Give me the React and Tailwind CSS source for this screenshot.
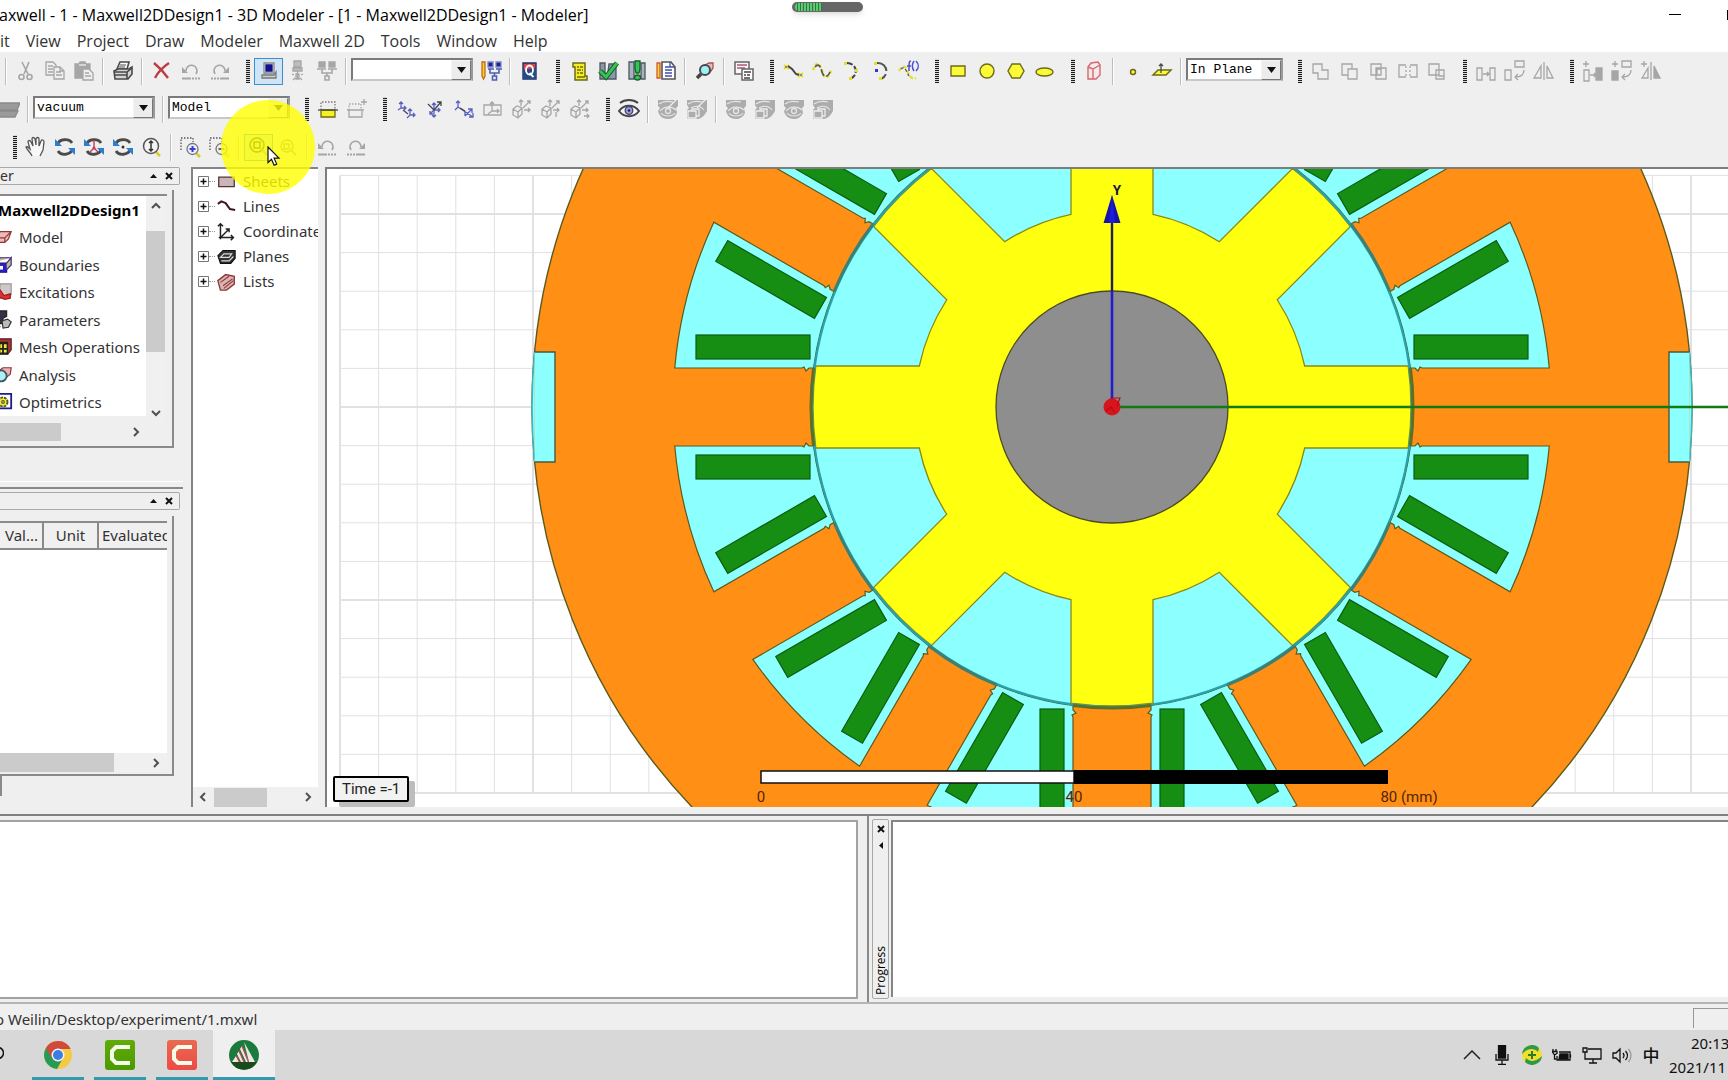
import React from "react";

const GREY = "#a6a6a6";
const DARK = "#4a4a4a";

function Icon({ children, size = 22, className = "" }) {
    return (
        <svg
            width={size}
            height={size}
            viewBox="0 0 22 22"
            fill="none"
            stroke={GREY}
            strokeWidth="1.3"
            className={"shrink-0 " + className}
            aria-hidden="true"
        >
            {children}
        </svg>
    );
}

const undo = (
    <>
        <path d="M6 11a5.500 5.500 0 1 1 10 3" strokeWidth="1.6" />
        <path d="M2 7v6h6z" fill={GREY} stroke="none" />
        <path d="M2 18.500h9M12 18.500h2M15 18.500h2M18 18.500h2" strokeWidth="2" />
    </>
);

const redo = (
    <>
        <path d="M16 11a5.500 5.500 0 1 0-10 3" strokeWidth="1.6" />
        <path d="M20 7v6h-6z" fill={GREY} stroke="none" />
        <path d="M2 18.500h2M5 18.500h2M8 18.500h2M11 18.500h9" strokeWidth="2" />
    </>
);

const rotateBase = (
    <>
        <path d="M4 8c1-5 11-6 14-1M4 15c3 5 12 4 14-1" stroke={DARK} strokeWidth="2.800" />
        <path d="M1 3v7h7z" fill="#2a7fd0" stroke="none" />
        <path d="M21 19v-7h-7z" fill="#2a7fd0" stroke="none" />
    </>
);

const eyeGrey = (
    <>
        <path d="M1 2h20v6l-2 2 1 5c-2 4-5 6-9 6-5 0-9-3-10-8l2-3-2-2z" fill="#acacac" stroke="none" />
        <path d="M2 6c4-3 9-3 14-2M3 13c4-5 12-5 16-1M4 15c3 4 11 4 14 0" stroke="#e6e6e6" strokeWidth="1.200" />
        <circle cx="11" cy="13" r="2.500" stroke="#e6e6e6" />
    </>
);

const eyeGreyBox = (
    <>
        <path d="M1 2h20v11c-2 4-5 7-9 8H1v-9l2-2-2-3z" fill="#acacac" stroke="none" />
        <path d="M2 6c4-3 9-3 14-2M5 10c5-3 10-2 13 2" stroke="#e6e6e6" strokeWidth="1.200" />
        <path d="M2 13h8v7H2zM6 13v-2h7v7h-3" stroke="#ededed" strokeWidth="1.300" />
    </>
);

const triad = (x, y) => (
    <path
        d={`M${x} ${y}v-7m-2 2l2-2 2 2M${x} ${y}h6m-2-2l2 2-2 2M${x} ${y}l-4 4m0-3v3h3`}
        strokeWidth="1.4"
    />
);

const solidAxes = (
    <>
        <path d="M2 11l4-3 5 2v6l-4 4-5-3zM2 11l5 3v6M7 14l4-4" />
        <path d="M10 8V2m-2 2l2-2 2 2M12 10l7-7m-3 0h3v3M13 12h6m-2-2l2 2-2 2" />
    </>
);

const ICONS = {
    layers: (
        <path d="M0 5h22l-3 7H0zM0 13h20l-3 6H0z" fill="#9a9a9a" stroke="#8a8a8a" />
    ),
    cut: (
        <>
            <path d="M7 2l6 12M14 2L9 14" strokeWidth="1.600" />
            <circle cx="6.500" cy="17" r="2.500" strokeWidth="1.600" />
            <circle cx="14.500" cy="17" r="2.500" strokeWidth="1.600" />
        </>
    ),
    copy: (
        <>
            <path d="M2 2h7l3 3v10H2zM4 6h5M4 9h5M4 12h5" />
            <path d="M10 7h6l4 4v8H10z" fill="#efefef" />
            <path d="M12 12h5M12 15h6M16 7v4h4" />
        </>
    ),
    paste: (
        <>
            <path d="M2 4h4l1-2h5l1 2h4v14H2z" fill={GREY} stroke={GREY} />
            <path d="M6 5h7" stroke="#efefef" />
            <path d="M10 9h6l4 4v7H10z" fill="#efefef" />
            <path d="M12 13h4M12 16h6" />
        </>
    ),
    print: (
        <g stroke={DARK} strokeWidth="1.6">
            <path d="M8 2h9l-2 7H5z" fill="#fff" />
            <path d="M8 5h6M7 7h6" strokeWidth="1" />
            <path d="M2 11l4-2h11l3-2v7l-4 5H3z" fill="#d5d5d5" />
            <path d="M2 12h13l5-4M2 15h13v4M15 12v4" />
        </g>
    ),
    remove: (
        <path d="M3 3c5 4 9 8 14 15M18 3C12 7 7 12 4 18" stroke="#bd3b44" strokeWidth="2.400" />
    ),
    undo,
    redo,
    local: (
        <>
            <path d="M6 3h10v10H6z" fill="#e6e6e6" stroke="#888" />
            <path d="M8 5h6v6H8z" fill="#10108c" stroke="#10108c" />
            <path d="M4 15h12l2-3v6H4z" fill="#d0d0d0" stroke="#777" />
        </>
    ),
    remote: (
        <>
            <path d="M7 1h7v6H7zM6 8h9v3H6z" fill="#bdbdbd" />
            <path d="M10.500 11v8M7 15l-2-1M14 15l2-1M8 18l-2 2M13 18l2 2M9 14h3v5H9z" />
        </>
    ),
    cluster: (
        <>
            <path d="M3 2h6v5H3zM13 2h6v5h-6z" fill={GREY} />
            <path d="M1 9h9M12 9h9M6 9v4h10V9M11 13v3M9 16h4v4H9z" strokeWidth="1.600" />
        </>
    ),
    clusterEdit: (
        <>
            <path d="M2 2h3v14l-1.500 3L2 16z" fill="#f2d21c" stroke="#c66a1e" />
            <path d="M8 2h5v5H8zM16 2h5v5h-5z" fill="#20208c" stroke="#7d88c8" />
            <path d="M8 9h6M16 9h6M10 9v4h9V9M14.500 13v3M12.500 16h4v4h-4z" stroke="#4d5fb0" strokeWidth="1.600" />
        </>
    ),
    queue: (
        <>
            <path d="M4 3h13v16H4z" fill="#d7474f" stroke="#1a3266" strokeWidth="1.400" />
            <path d="M4 10v9h13V8z" fill="#254a86" stroke="none" />
            <ellipse cx="10.500" cy="10" rx="3.500" ry="4.500" stroke="#fff" strokeWidth="1.800" />
            <path d="M10.500 13l4 4" stroke="#fff" strokeWidth="1.800" />
        </>
    ),
    list: (
        <>
            <path d="M5 3h12v13h2v4H7V7H5z" fill="#f4ee22" stroke="#6d6a1c" strokeWidth="1.500" />
            <path d="M9 7h2M12 7h3M9 10h4M14 10h1M9 13h2M12 13h3M9 17h8" stroke="#6d6a1c" />
        </>
    ),
    validate: (
        <>
            <path d="M3 3h5v16H3zM12 4h7v15h-9z" fill="#8c98a8" stroke="#4c5866" />
            <path d="M3 11l6 6L20 3" stroke="#145a20" strokeWidth="5" />
            <path d="M3 11l6 6L20 3" stroke="#35c455" strokeWidth="3" />
        </>
    ),
    analyze: (
        <>
            <path d="M3 2h5v17H3zM15 3h4v16h-4z" fill="#a9b3c0" stroke="#4c5866" />
            <path d="M9 1h5v8l-1 4h-3L9 9z" fill="#35c455" stroke="#1a5c2b" />
            <ellipse cx="11.500" cy="17.500" rx="3" ry="2.500" fill="#35c455" stroke="#1a5c2b" />
        </>
    ),
    notes: (
        <>
            <path d="M2 3h3v15H2z" fill="#f3da1c" stroke="#d8553c" />
            <path d="M7 2h9l4 5v12H7z" fill="#fff" stroke="#555" strokeWidth="1.600" />
            <path d="M10 7h5M10 10h7M10 13h7M10 16h7M15 2v5h5" stroke="#3f4fa8" />
        </>
    ),
    inspect: (
        <>
            <path d="M11 5l4-2h4v5l-4 6" fill="#e9b8b8" stroke="#a35454" />
            <circle cx="11" cy="10" r="5" fill="#9ff0f6" stroke={DARK} strokeWidth="2" />
            <path d="M7 14l-4 4" stroke="#444" strokeWidth="3.500" />
        </>
    ),
    windows: (
        <g stroke="#666">
            <path d="M2 2h14v12H2z" fill="#f6f6f6" strokeWidth="1.500" />
            <path d="M4 5h10M4 8h8" stroke="#b05a72" />
            <path d="M9 9h11v11H9z" fill="#fff" strokeWidth="1.500" />
            <path d="M11 12h7M11 15h2M14 15h3M11 18h6" stroke="#444" />
        </g>
    ),
    line: (
        <>
            <path d="M2 5l5 4M2 9l5-4M16 13l5 4M16 17l5-4" stroke="#e3df26" strokeWidth="2" />
            <path d="M6 6l4 3 4 5 3 1" stroke="#444" strokeWidth="2" />
            <path d="M3 7h2M18 15h2" stroke="#777" strokeWidth="1.500" />
        </>
    ),
    spline: (
        <>
            <path d="M2 10c3-9 7-7 9 1s6 9 9-1" stroke="#e3df26" strokeWidth="2.600" strokeDasharray="3 2" />
            <path d="M4 7c4-5 6 1 7 5s5 7 8 0" stroke="#555" strokeWidth="1.600" strokeDasharray="7 2" />
        </>
    ),
    arc3: (
        <>
            <path d="M6 3c10-1 14 12 4 16" stroke="#444" strokeWidth="2" strokeDasharray="7 2" />
            <path d="M4 2h3v3H4zM15 9h3v3h-3zM9 17h3v3H9z" fill="#e3df26" stroke="none" />
        </>
    ),
    arcCenter: (
        <>
            <path d="M8 3c10-1 13 12 4 16" stroke="#555" strokeWidth="2" strokeDasharray="14 3" />
            <path d="M6 9h3v3H6z" fill="#3038d8" stroke="none" />
            <path d="M5 2h3v3H5zM10 17h3v3h-3z" fill="#e3df26" stroke="none" />
        </>
    ),
    equation: (
        <>
            <path d="M1 11c3-5 6-6 8-1s4 10 9 8" stroke="#e3df26" strokeWidth="2.200" strokeDasharray="4 2" />
            <path d="M3 9c4-4 6 4 8 7" stroke="#555" strokeDasharray="3 2" />
            <path d="M13 1c-2 0-2 1-2 10M9 6h4M16 1c-2 3-2 7 0 10M18 1c3 3 3 7 0 10" stroke="#4c50d6" strokeWidth="1.500" />
        </>
    ),
    rect: <path d="M4 6h14v10H4z" fill="#fbfb35" stroke="#6d6a1c" strokeWidth="1.400" />,
    circle: <circle cx="11" cy="11" r="7" fill="#fbfb35" stroke="#6d6a1c" strokeWidth="1.400" />,
    hexagon: <path d="M7 4h8l4 7-4 7H7l-4-7z" fill="#fbfb35" stroke="#6d6a1c" strokeWidth="1.400" />,
    ellipse: <ellipse cx="10.500" cy="12" rx="8.500" ry="4" fill="#fbfb35" stroke="#6d6a1c" strokeWidth="1.400" />,
    box: (
        <path d="M5 7l3-4 7-1 2 3v10l-4 4H5zM5 7l5 2 7-4M10 9v10" fill="#f6e9e9" stroke="#d8666e" strokeWidth="1.400" />
    ),
    point: <circle cx="11" cy="12" r="2.500" fill="#fbfb35" stroke="#6d6a1c" strokeWidth="1.500" />,
    plane: (
        <>
            <path d="M2 15l5-5h13l-5 5z" fill="#fbfb35" stroke="#6d6a1c" strokeWidth="1.500" />
            <path d="M10 13V4m-2 2l2-2 2 2" stroke={DARK} />
        </>
    ),
    unite: <path d="M3 4h9v6h6v9H8v-6H3z" />,
    subtract: <path d="M3 4h10v5h5v10H9v-4H3zM9 15V9h5" />,
    intersect: <path d="M3 4h10v11H3zM8 8h10v11H8zM9 9h4v6H9z" />,
    split: <path d="M9 5H2v12h7M13 5h7v12h-7M9 6v2M13 6v2M9 10v2M13 10v2M9 14v2M13 14v2" />,
    imprint: <path d="M3 4h10v11H3zM10 10h8v9h-8zM13 10v6h5" />,
    move: <path d="M2 8h5v12H2zM15 8h5v12h-5zM8 14h6m-2-2l2 2-2 2" />,
    rotate: <path d="M1 10h6v10H1zM11 1h9v6h-9zM20 10c0 5-4 7-9 7m3-3l-3 3 3 3" />,
    mirror: <path d="M11 2v18M8 6v12H1zM14 6v12h6z" />,
    moveCopy: (
        <>
            <path d="M2 10h5v11H2zM8 15h6m-2-2l2 2-2 2M4 1v6M1 4h6" />
            <path d="M14 8h6v12h-6z" fill={GREY} />
        </>
    ),
    rotateCopy: (
        <>
            <path d="M11 1h9v6h-9zM20 10c0 5-4 7-9 7m3-3l-3 3 3 3M4 1v6M1 4h6" />
            <path d="M1 11h6v9H1z" fill={GREY} />
        </>
    ),
    mirrorCopy: (
        <>
            <path d="M11 2v18M8 8v10H2zM4 1v6M1 4h6" />
            <path d="M14 6v12h6z" fill={GREY} />
        </>
    ),
    section: (
        <>
            <path d="M4 12V4h14v8" stroke="#777" strokeDasharray="1.500 1.500" />
            <path d="M4 12h14v7H4z" fill="#f4f41c" stroke="#6d6a1c" />
            <path d="M1 12h20" stroke={DARK} />
        </>
    ),
    sectionAdd: (
        <>
            <path d="M3 12V6h12v5" strokeDasharray="1.500 1.500" />
            <path d="M3 12h13v7H3zM1 12h17M18 1v6M15 4h6" />
        </>
    ),
    csRelative: (
        <g stroke="#5a62c0">
            <path d="M6 10V4m-2 2l2-2 2 2M6 10h5m-2-2l2 2-2 2M6 10l-3 2M15 17v-6m-2 2l2-2 2 2M15 17h5m-2-2l2 2-2 2M15 17l-3 3" />
            <path d="M8 12l5 4" stroke="#444" />
        </g>
    ),
    csRotate: (
        <g stroke="#5a62c0">
            {triad(10, 12)}
            <path d="M10 12v7m-2-2l2 2 2-2" />
            <path d="M10 12l7-8m-4 0h4v4M10 12L4 6" stroke="#444" />
        </g>
    ),
    csBoth: (
        <g stroke="#5a62c0">
            <path d="M5 9V3m-2 2l2-2 2 2M5 9l-3 3M5 9l15 10m-4 0h4v-4M12 18l7-7m-4 0h4v4M12 18v-4" />
            <path d="M7 10l5 3" stroke="#444" />
        </g>
    ),
    csFace: <path d="M2 7h17v10H2zM10 13V4m-2 2l2-2 2 2M10 13h7m-2-2l2 2-2 2M10 13l-4 3" />,
    csObject: solidAxes,
    csObjectRotate: <>{solidAxes}<path d="M16 14v5" /></>,
    csObjectBoth: <>{solidAxes}<path d="M15 18h5m-2-2l2 2-2 2" /></>,
    eye: (
        <>
            <path d="M2 5c5-4 13-4 18 0" stroke="#444" strokeWidth="2" />
            <path d="M1 13c5-7 15-7 20 0-5 7-15 7-20 0z" fill="#f4f4f4" stroke="#44444c" strokeWidth="2" />
            <circle cx="11" cy="12.500" r="3.800" fill="#9d9dd2" stroke="#44446c" strokeWidth="1.300" />
            <circle cx="11" cy="12.500" r="1.300" fill="#20208c" stroke="none" />
        </>
    ),
    hideSel: <>{eyeGrey}<path d="M11 10l9-9" stroke="#efefef" strokeWidth="1.200" /></>,
    hideSelBox: <>{eyeGreyBox}<path d="M11 10l9-9" stroke="#efefef" strokeWidth="1.200" /></>,
    eyeGrey,
    eyeGreyBox,
    pan: (
        <path
            d="M7 20c-1-3-5-6-6-9 1-1 2 0 4 2L3 6c0-2 2-2 3 0l2 4-1-7c0-2 2-2 3 0l1 6V3c0-2 3-2 3 0v7l2-5c1-2 3-1 3 1l-1 8-3 6"
            fill="#f8f8f8"
            stroke="#555"
        />
    ),
    rotateModel: rotateBase,
    rotateCurrent: (
        <>
            {rotateBase}
            <path d="M11 4v8M7 16l4-4 4 4" stroke="#c43f5a" strokeWidth="1.400" />
            <circle cx="11" cy="12" r="1.500" fill="#c43f5a" stroke="none" />
        </>
    ),
    rotateScreen: <>{rotateBase}<circle cx="11" cy="11" r="1.500" fill="#333" stroke="none" /></>,
    zoom: (
        <>
            <path d="M14 15l5 5" stroke="#d6cf2a" strokeWidth="2.500" />
            <circle cx="10" cy="10" r="7.500" fill="#f3f3f3" stroke="#555" strokeWidth="1.500" />
            <path d="M10 5v10M8 7l2-2 2 2M8 13l2 2 2-2" stroke="#333" strokeWidth="1.500" />
        </>
    ),
    zoomIn: (
        <>
            <path d="M1 14V2h12v4" stroke="#555" strokeDasharray="1.500 1.500" />
            <path d="M16 17l4 4" stroke="#d6cf2a" strokeWidth="2.500" />
            <circle cx="12.500" cy="13" r="5.500" fill="#eef" stroke="#777" />
            <path d="M12.500 10v6M9.500 13h6" stroke="#3440c8" strokeWidth="2" />
        </>
    ),
    zoomOut: (
        <>
            <path d="M1 14V2h12v4" stroke="#555" strokeDasharray="1.500 1.500" />
            <path d="M16 17l4 4" stroke="#d6cf2a" strokeWidth="2.500" />
            <circle cx="12.500" cy="13" r="5.500" fill="#eee" stroke="#777" />
            <path d="M9.500 13h6" stroke="#666" strokeWidth="2" />
        </>
    ),
    fitAll: (
        <>
            <circle cx="9" cy="9" r="7" stroke="#222" strokeWidth="1.500" />
            <path d="M6 6h6v6H6z" stroke="#222" strokeWidth="1.500" />
            <path d="M14 14l5 5" stroke="#999" strokeWidth="2" />
        </>
    ),
    fitSel: (
        <>
            <circle cx="10" cy="10" r="6" stroke="#888" />
            <path d="M7 8h5v5H7zM14 14l5 5" stroke="#888" />
        </>
    ),
};

function Tool({ name, label, active = false }) {
    return (
        <button
            type="button"
            aria-label={label || name}
            className={
                "flex h-[27px] w-[29px] shrink-0 items-center justify-center border " +
                (active ? "border-[#3a8fd0] bg-[#cfe5f7]" : "border-transparent")
            }
        >
            <Icon>{ICONS[name]}</Icon>
        </button>
    );
}

function Tools({ names }) {
    return names.split(" ").map((name) => <Tool key={name} name={name} />);
}

function Sep() {
    return <span className="mx-[4px] h-[27px] w-[2px] shrink-0 border-r border-white bg-[#bdbdbd]" />;
}

function Grip() {
    return (
        <span className="mr-1 ml-3 h-[24px] w-1 shrink-0 bg-[repeating-linear-gradient(0deg,#1c1c1c_0_1px,#d8d8d8_1px_2px)]" />
    );
}

function Combo({ label, value, className }) {
    return (
        <label className={"relative mr-[3px] mb-[3px] h-[23px] shrink-0 " + className}>
            <select
                aria-label={label}
                className="block h-full w-full appearance-none border-2 border-[#7a7a7a] border-r-[#9a9a9a] border-b-[#c8c8c8] bg-white pl-[2px] font-['Liberation_Mono','DejaVu_Sans_Mono',monospace] text-[13px] leading-[18px] text-black"
                defaultValue={value}
            >
                <option>{value}</option>
            </select>
            <span className="pointer-events-none absolute top-[2px] right-[2px] flex h-[20px] w-[20px] items-center justify-center border border-t-[#f4f4f4] border-r-[#777] border-b-[#777] border-l-[#f4f4f4] bg-[#ececec]">
                <svg width="9" height="6" viewBox="0 0 9 6"><path d="M0 0h9L4.500 6z" fill="#111" /></svg>
            </span>
        </label>
    );
}

function Chevron({ dir }) {
    const paths = {
        up: "M1 7l4-4 4 4",
        down: "M1 3l4 4 4-4",
        left: "M7 1L3 5l4 4",
        right: "M3 1l4 4-4 4",
    };
    return (
        <button type="button" aria-label={"Scroll " + dir} className="flex h-[19px] w-[19px] shrink-0 items-center justify-center">
            <svg width="10" height="10" viewBox="0 0 10 10" fill="none" stroke="#505050" strokeWidth="2">
                <path d={paths[dir]} />
            </svg>
        </button>
    );
}

function DockTitle({ children }) {
    return (
        <div className="mr-[3px] flex h-[18px] shrink-0 items-center rounded-r-[2px] border border-l-0 border-[#a8a8a8]">
            <span className="flex-1 text-[14px] leading-[16px] text-[#333]">{children}</span>
            <button type="button" aria-label="Collapse" className="flex w-4 justify-center">
                <svg width="7" height="4" viewBox="0 0 7 4"><path d="M0 4l3.500-4L7 4z" fill="#111" /></svg>
            </button>
            <button type="button" aria-label="Close" className="mr-[2px] flex w-4 justify-center">
                <svg width="8" height="8" viewBox="0 0 8 8"><path d="M1 1l6 6M7 1L1 7" stroke="#111" strokeWidth="2" /></svg>
            </button>
        </div>
    );
}

const PROJECT_ITEMS = [
    ["Model", <path key="i" d="M1 12L8 5h12l-3 8-4 4H1zM1 12h12v5M13 12l7-7" fill="#f0b9b9" stroke="#8b3a3a" />],
    ["Boundaries", <><path d="M1 9h14v10H1z" fill="#2a1cc8" stroke="#1c1480" /><path d="M4 12h7v4H4z" fill="#fff" stroke="none" /><path d="M15 9l5-6v8l-5 5M2 8l6-5h12" fill="#c8b894" stroke="#3a2a80" /></>],
    ["Excitations", <><path d="M8 2h12v12l-4 4H6z" fill="#d0c8c8" stroke="#999" /><path d="M1 14l5-8 6 9 7-2v5l-6 1z" fill="#e03030" stroke="#a01818" /></>],
    ["Parameters", <><path d="M3 1h12v6l-4 2v6H3z" fill="#333348" stroke="#222" /><path d="M5 5h3M10 12l6-2 4 3-3 6-6 1z" fill="#bbb" stroke="#333" /><path d="M3 15l5 4" stroke="#a01848" strokeWidth="2" /></>],
    ["Mesh Operations", <><path d="M1 6l4-4h15v12l-4 5" fill="#a33" stroke="#522" /><path d="M1 6h15v13H1z" fill="#222" stroke="#222" /><path d="M3 8h3v4H3zM8 8h2v4H8zM12 8h3v4h-3zM3 14h3v3H3zM8 14h2v3H8zM12 14h3v3h-3z" fill="#f2ec30" stroke="none" /></>],
    ["Analysis", <><path d="M6 7l5-4h9l-1 7-6 5" fill="#eeb0b0" stroke="#8b3a3a" /><circle cx="9" cy="12" r="6" fill="#aef0f4" stroke="#3c5560" strokeWidth="2" /></>],
    ["Optimetrics", <><path d="M2 2h18v16H2z" fill="#fff" stroke="#1c1c90" strokeWidth="2" /><circle cx="11" cy="11" r="5" fill="#f2ec30" stroke="#555520" strokeWidth="2" strokeDasharray="3 1" /><circle cx="11" cy="11" r="1.500" stroke="#555" /></>],
];

function ProjectManager() {
    return (
        <section className="flex h-[315px] shrink-0 flex-col pt-px">
            <DockTitle>er</DockTitle>
            <div className="mt-[5px] mr-[9px] h-[258px] border-r-2 border-b-2 border-[#8a8a8a] pt-[4px] pr-[5px]">
                <div className="flex h-[228px] border-t-2 border-[#8a8a8a]">
                    <ul className="grid h-[220px] flex-1 grid-rows-8 overflow-hidden bg-white text-[15px] text-[#333]">
                        <li className="-ml-[2px] flex items-center font-bold text-black">Maxwell2DDesign1</li>
                        {PROJECT_ITEMS.map(([name, drawing]) => (
                            <li key={name} className="flex items-center whitespace-nowrap">
                                <Icon size={20} className="mr-[6px] -ml-[7px]">{drawing}</Icon>
                                {name}
                            </li>
                        ))}
                    </ul>
                    <div className="mr-[2px] flex w-[19px] flex-col justify-between bg-[#f0f0f0]">
                        <Chevron dir="up" />
                        <div className="mt-[16px] mb-auto h-[121px] bg-[#cbcbcb]" />
                        <Chevron dir="down" />
                    </div>
                </div>
                <div className="flex h-[19px] items-center">
                    <div className="h-[18px] w-[61px] bg-[#cbcbcb]" />
                    <div className="mr-[22px] ml-auto"><Chevron dir="right" /></div>
                </div>
            </div>
        </section>
    );
}

function Properties() {
    return (
        <section className="flex flex-1 flex-col border-t border-white">
            <div className="mt-[5px] mb-[3px] h-[2px] shrink-0 bg-[#8a8a8a]" />
            <DockTitle />
            <div className="mt-[6px] mr-[9px] flex h-[260px] flex-col border-r-2 border-b-2 border-[#8a8a8a] pt-[5px] pr-[5px] pb-[2px]">
                <div className="flex-1 overflow-hidden border-t-2 border-[#8a8a8a] bg-white">
                    <table className="w-full table-fixed border-collapse text-[15px] text-[#333]">
                        <thead>
                            <tr className="h-[26px] border-b-2 border-[#8a8a8a] bg-[#f0f0f0]">
                                <th className="w-[43px] border-r-2 border-[#8a8a8a] p-0 pl-[5px] text-left font-normal">Val...</th>
                                <th className="w-[55px] border-r-2 border-[#8a8a8a] p-0 font-normal">Unit</th>
                                <th className="overflow-hidden p-0 pl-[3px] text-left font-normal">Evaluated</th>
                            </tr>
                        </thead>
                    </table>
                </div>
                <div className="flex h-[19px] items-center bg-[#f0f0f0]">
                    <div className="h-[19px] w-[114px] bg-[#cbcbcb]" />
                    <div className="mr-[2px] ml-auto"><Chevron dir="right" /></div>
                </div>
            </div>
            <div className="h-[20px] w-[2px] bg-[#8a8a8a]" />
        </section>
    );
}

const MODEL_ITEMS = [
    ["Sheets", <path key="i" d="M2 6h18v11H2z" fill="#c9b6bb" stroke="#5a3030" strokeWidth="1.500" />],
    ["Lines", <path key="i" d="M1 8l4-3 5 2 5 7 6 1" stroke="#43181e" strokeWidth="2.400" />],
    ["Coordinate Systems", <path key="i" d="M4 20V2M1 5l3-3 3 3M2 18h17M16 15l3 3-3 3M5 17L14 8M10 8h4v4" stroke="#222" strokeWidth="1.700" />],
    ["Planes", <><path d="M1 10l6-6h14v9l-5 6H4z" fill="#333" stroke="#111" /><path d="M4 12l4-4h9l-3 4zM5 16h9l5-5" stroke="#ddd" strokeWidth="1.300" /></>],
    ["Lists", <><path d="M1 10l9-7 10 2v9l-9 7H4z" fill="#ddb3b3" stroke="#8b3a3a" strokeWidth="1.600" /><path d="M4 12l10-7M7 16l11-8M8 19L19 10" stroke="#8b3a3a" /></>],
];

function ModelTree() {
    return (
        <section className="mt-px flex w-[134px] shrink-0 flex-col">
            <div className="mr-[7px] flex flex-1 flex-col border-t-2 border-l-2 border-[#858585] bg-white">
                <ul className="flex-1 overflow-hidden text-[15px] text-[#333]">
                    {MODEL_ITEMS.map(([name, drawing]) => (
                        <li key={name} className="flex h-[25px] items-center whitespace-nowrap">
                            <button type="button" aria-label={"Expand " + name} className="ml-[5px] shrink-0">
                                <svg width="11" height="11" viewBox="0 0 11 11" fill="none">
                                    <path d="M.5.5h10v10H.5z" stroke="#777" />
                                    <path d="M2.500 5.500h6M5.500 2.500v6" stroke="#111" strokeWidth="1.500" />
                                </svg>
                            </button>
                            <span className="mr-[2px] w-[6px] shrink-0 border-t border-dotted border-[#999]" />
                            <Icon size={19}>{drawing}</Icon>
                            <span className="ml-[7px]">{name}</span>
                        </li>
                    ))}
                </ul>
                <div className="flex h-[20px] items-center bg-[#f0f0f0]">
                    <Chevron dir="left" />
                    <div className="ml-[2px] h-[19px] w-[53px] bg-[#cbcbcb]" />
                    <div className="mr-px ml-auto"><Chevron dir="right" /></div>
                </div>
            </div>
        </section>
    );
}

// Motor cross-section, all radii in drawing units around the shaft centre.
const CX = 785;
const CY = 238;
const R_STATOR = 580;
const R_SLOT = 439;
const R_BORE = 301;
const R_ROTOR = 299;
const R_HUB = 197;
const R_SHAFT = 116;
const TOOTH = 39;
const POLE = 41;
const GRID = 38.6;

function rot(x, y, deg) {
    const a = (deg * Math.PI) / 180;
    return [x * Math.cos(a) - y * Math.sin(a), x * Math.sin(a) + y * Math.cos(a)];
}

function pts(list) {
    return list.map(([x, y]) => x.toFixed(2) + " " + y.toFixed(2)).join("L");
}

const boreX = Math.sqrt(R_BORE ** 2 - TOOTH ** 2);

function slotPath() {
    const xo = Math.sqrt(R_SLOT ** 2 - TOOTH ** 2);
    const edge = [[boreX, TOOTH], [303, TOOTH], [306, TOOTH - 3], [308, TOOTH + 1], [310, TOOTH], [xo, TOOTH]];
    const back = edge.map(([x, y]) => rot(x, -y, 30)).reverse();
    return `M${pts(edge)}A${R_SLOT} ${R_SLOT} 0 0 1 ${pts(back)}A${R_BORE} ${R_BORE} 0 0 0 ${pts([edge[0]])}Z`;
}

function rotorPath() {
    const xo = Math.sqrt(R_ROTOR ** 2 - POLE ** 2);
    const xi = Math.sqrt(R_HUB ** 2 - POLE ** 2);
    let d = "";
    for (let i = 0; i < 8; i++) {
        const a = rot(xi, -POLE, i * 45);
        const b = rot(xo, -POLE, i * 45);
        const c = rot(xo, POLE, i * 45);
        const e = rot(xi, POLE, i * 45);
        d += i === 0 ? `M${pts([a])}` : `A${R_HUB} ${R_HUB} 0 0 1 ${pts([a])}`;
        d += `L${pts([b])}A${R_ROTOR} ${R_ROTOR} 0 0 1 ${pts([c])}L${pts([e])}`;
    }
    return d + `A${R_HUB} ${R_HUB} 0 0 1 ${pts([rot(xi, -POLE, 0)])}Z`;
}

const TWELVE = Array.from({ length: 12 }, (_, i) => i * 30);

function Viewport() {
    const keyX = Math.sqrt(R_STATOR ** 2 - 55 ** 2);
    return (
        <section className="relative mt-px min-w-0 flex-1 overflow-hidden border-t-2 border-l-2 border-[#7d7d7d] bg-white">
            <svg className="block h-full w-full" aria-label="Motor cross-section">
                <g transform={`translate(${CX} ${CY})`}>
                    <g stroke="#e1e1e1">
                        {Array.from({ length: 41 }, (_, i) => i - 20).map((k) => (
                            <line key={"v" + k} x1={k * GRID} x2={k * GRID} y1={-6 * GRID} y2={10 * GRID} strokeWidth={k % 5 === 0 ? 2 : 1} />
                        ))}
                        {Array.from({ length: 17 }, (_, i) => i - 6).map((k) => (
                            <line key={"h" + k} x1={-20 * GRID} x2={20 * GRID} y1={k * GRID} y2={k * GRID} strokeWidth={k % 5 === 0 ? 2 : 1} />
                        ))}
                    </g>
                    <circle r={R_STATOR} fill="#ff9015" stroke="#5c5a1c" strokeWidth="1.400" />
                    {[1, -1].map((s) => (
                        <g key={s} transform={`scale(${s} 1)`}>
                            <path d={`M${keyX} -55A${R_STATOR} ${R_STATOR} 0 0 1 ${keyX} 55`} fill="#8cffff" stroke="#3fb4bc" strokeWidth="1.500" />
                            <path d={`M${keyX} -55H557V55H${keyX}`} fill="#8cffff" stroke="#4a5a3a" strokeWidth="1.400" />
                        </g>
                    ))}
                    <circle r={R_BORE} fill="#8cffff" />
                    {TWELVE.map((a) => (
                        <path key={a} d={slotPath()} transform={`rotate(${a})`} fill="#8cffff" stroke="#5c5a1c" strokeWidth="1.200" />
                    ))}
                    {TWELVE.map((a) => (
                        <g key={a} transform={`rotate(${a})`} fill="#168e14" stroke="#0c5c0c" strokeWidth="1.200">
                            <rect x="302" y="-72" width="114" height="24" />
                            <rect x="302" y="48" width="114" height="24" />
                        </g>
                    ))}
                    <path d={rotorPath()} fill="#ffff10" stroke="#8a8a14" strokeWidth="1.300" />
                    <circle r={R_BORE - 1} stroke="#27a3b0" strokeWidth="2.200" fill="none" />
                    {TWELVE.map((a) => (
                        <path
                            key={a}
                            d={`M${boreX} -${TOOTH}A${R_BORE} ${R_BORE} 0 0 1 ${boreX} ${TOOTH}`}
                            transform={`rotate(${a})`}
                            fill="none"
                            stroke={a % 90 === 0 ? "#5f7022" : "#3d7f70"}
                            strokeWidth="3"
                        />
                    ))}
                    <circle r={R_SHAFT} fill="#8e8e8e" stroke="#4c4c20" strokeWidth="1.300" />
                    <line x1="0" x2="1200" y1="0" y2="0" stroke="#137a13" strokeWidth="2.400" />
                    <line x1="0" x2="0" y1="0" y2={-R_SHAFT} stroke="#2020d0" strokeWidth="2.600" />
                    <line x1="0" x2="0" y1={-R_SHAFT} y2="-184" stroke="#202048" strokeWidth="2.400" />
                    <path d="M0-212L8.500-184H-8.500z" fill="#1414a8" />
                    <path d="M0-212L3-184H-3z" fill="#1c1ce0" />
                    <circle r="8.500" fill="#d8141c" />
                    <path d="M-2-9h10l-3 8M-6 4l5-4 4 6" stroke="#b01016" strokeWidth="1.200" fill="none" />
                    <text x="5" y="-212" textAnchor="middle" fontSize="14" fontWeight="bold" fontFamily="'Liberation Mono', monospace" fill="#141450">Y</text>
                    <rect x="-351" y="364" width="313" height="12" fill="#fff" stroke="#111" strokeWidth="1.500" />
                    <rect x="-38" y="363" width="314" height="14" fill="#000" />
                    <g fontSize="15" fontFamily="Roboto, sans-serif" fill="#54240a" textAnchor="middle">
                        <text x="-351" y="395">0</text>
                        <text x="-38" y="395">40</text>
                        <text x="297" y="395">80 (mm)</text>
                    </g>
                </g>
            </svg>
            <div className="absolute bottom-[5px] left-[6px] rounded-[2px] border-2 border-black bg-[#f2f2f2] px-[7px] font-['Roboto',sans-serif] text-[15px] leading-[22px] text-[#222] shadow-[6px_5px_0_#bdbdbd]">
                Time =-1
            </div>
        </section>
    );
}

function BottomDocks() {
    return (
        <div className="flex h-[190px] shrink-0 border-t-2 border-b-2 border-t-[#808080] border-b-[#b4b4b4]">
            <div className="flex w-[869px] shrink-0 border-r-2 border-[#8a8a8a] pt-[4px] pr-[9px] pb-[3px]">
                <div className="flex-1 border-t-2 border-r-2 border-b-2 border-[#a2a2a2] bg-white" />
            </div>
            <div className="m-[3px] mr-[2px] flex w-[17px] shrink-0 flex-col items-center rounded-[2px] border border-[#a8a8a8] pt-[5px] pb-[3px]">
                <button type="button" aria-label="Close progress">
                    <svg width="8" height="8" viewBox="0 0 8 8" className="block"><path d="M1 1l6 6M7 1L1 7" stroke="#111" strokeWidth="2" /></svg>
                </button>
                <button type="button" aria-label="Collapse progress" className="mt-[9px]">
                    <svg width="4" height="7" viewBox="0 0 4 7" className="block"><path d="M4 0v7L0 3.500z" fill="#111" /></svg>
                </button>
                <span className="mt-auto rotate-180 font-['Open_Sans',sans-serif] text-[12px] leading-[14px] text-black [writing-mode:vertical-rl]">Progress</span>
            </div>
            <div className="mt-[4px] mb-[5px] flex-1 border-t-2 border-l-2 border-[#858585] bg-white" />
        </div>
    );
}

function Camtasia({ from, to, id }) {
    return (
        <svg width="30" height="30" viewBox="0 0 30 30" aria-hidden="true">
            <defs>
                <linearGradient id={id} x1="0" y1="0" x2="0" y2="1">
                    <stop offset="0" stopColor={from} />
                    <stop offset="1" stopColor={to} />
                </linearGradient>
            </defs>
            <rect width="30" height="30" rx="3" fill={`url(#${id})`} />
            <path d="M25 7H11L7 11v8l4 4h14" fill="none" stroke="#f4fbe8" strokeWidth="4" />
        </svg>
    );
}

function TaskApp({ label, active, children }) {
    return (
        <button
            type="button"
            aria-label={label}
            className={"flex h-full w-[62px] flex-col items-center justify-between pt-[10px] " + (active ? "bg-[#efefef]" : "px-[5px]")}
        >
            {children}
            <span className="h-[3px] w-full bg-[#3399ad]" />
        </button>
    );
}

function Taskbar() {
    return (
        <footer className="flex h-[50px] shrink-0 items-stretch bg-[#d8d8d8]">
            <button type="button" aria-label="Task view" className="w-[27px] overflow-hidden">
                <svg width="12" height="14" viewBox="0 0 12 14" className="-mt-[5px] -ml-[8px] block"><circle cx="6" cy="7" r="5.500" fill="none" stroke="#111" strokeWidth="1.500" /></svg>
            </button>
            <TaskApp label="Chrome">
                <svg width="28" height="30" viewBox="0 0 28 30" aria-hidden="true">
                    <circle cx="14" cy="15" r="14" fill="#f6c945" />
                    <path d="M14 15L1.900 8A14 14 0 0 0 13 29l6-11z" fill="#279a55" />
                    <path d="M1.900 8A14 14 0 0 1 26.600 9H14l-6 9.500z" fill="#cf4a3c" />
                    <circle cx="14" cy="15" r="6.500" fill="#f4f4f4" />
                    <circle cx="14" cy="15" r="5" fill="#3b7de0" />
                </svg>
            </TaskApp>
            <TaskApp label="Camtasia"><Camtasia id="cam" from="#62ab08" to="#4a9a00" /></TaskApp>
            <TaskApp label="Camtasia Recorder"><Camtasia id="rec" from="#e96a50" to="#ee4a45" /></TaskApp>
            <TaskApp label="Maxwell" active>
                <svg width="30" height="30" viewBox="0 0 30 30" aria-hidden="true">
                    <circle cx="15" cy="15" r="15" fill="#1c7a3c" />
                    <path d="M2 22a15 15 0 0 0 26 0z" fill="#1a4a1c" />
                    <path d="M15 2l11 20h-6z" fill="#e9e9e9" />
                    <path d="M13 6l7 16h-3L11 9zM10 11l5 11h-3L8 14zM7 16l3 6H3z" fill="#efe7e7" />
                    <path d="M13 6l6.500 16M10 11l5 11M7.500 16l3 6" stroke="#c0454f" strokeWidth="1.300" />
                </svg>
            </TaskApp>
            <div className="ml-auto flex items-center text-[#111]">
                <button type="button" aria-label="Hidden icons" className="flex w-[30px] justify-center">
                    <svg width="18" height="10" viewBox="0 0 18 10" fill="none" stroke="#222" strokeWidth="1.500"><path d="M1 9l8-8 8 8" /></svg>
                </button>
                <span className="flex w-[30px] justify-center">
                    <svg width="14" height="20" viewBox="0 0 14 20" fill="none" stroke="#111" strokeWidth="1.300"><path d="M3.500 0h7v13h-7z" fill="#111" /><path d="M1 9v6h12V9M7 15v4M3 19.300h8" /></svg>
                </span>
                <span className="flex w-[30px] justify-center">
                    <svg width="20" height="20" viewBox="0 0 20 20"><circle cx="10" cy="10" r="10" fill="#f3de2c" /><path d="M0 9A10 10 0 0 1 17 3l-1 4C11 2 5 4 0 9zM20 11A10 10 0 0 1 3 17l1-4c5 5 11 3 16-2z" fill="#2c9a4e" /><path d="M10 6v8M6 10h8" stroke="#2c7a2e" strokeWidth="2" /></svg>
                </span>
                <span className="flex w-[30px] justify-center">
                    <svg width="20" height="14" viewBox="0 0 20 14" fill="none" stroke="#111" strokeWidth="1.300"><path d="M7 4h11v8H5V8" /><path d="M8 6h8v5H7z" fill="#111" /><path d="M18.500 6.500v3M1 1v2M4 1v2M0 3.500h5v2L2.500 7zM2.500 7v4h2" /></svg>
                </span>
                <span className="flex w-[30px] justify-center">
                    <svg width="20" height="17" viewBox="0 0 20 17" fill="none" stroke="#111" strokeWidth="1.300"><path d="M6 2h13v10H3V7M11 12v4M7 16h8M1 1h4v4H1zM3 5v3" /></svg>
                </span>
                <span className="flex w-[30px] justify-center">
                    <svg width="20" height="17" viewBox="0 0 20 17" fill="none" stroke="#111" strokeWidth="1.300"><path d="M1 6h3l4-4v13l-4-4H1zM11 6q2 2.500 0 5M13.500 4q4 4.500 0 9" /><path d="M16.500 2q5 6.500 0 13" stroke="#999" /></svg>
                </span>
                <button type="button" className="w-[28px] text-center font-['Noto_Sans_CJK_SC',sans-serif] text-[17px] font-medium">中</button>
                <time className="ml-[4px] w-[59px] overflow-hidden text-[15px] leading-[24px] whitespace-nowrap">
                    <span className="block pl-[22px]">20:13</span>
                    <span className="block">2021/11</span>
                </time>
            </div>
        </footer>
    );
}

const MENUS = ["View", "Project", "Draw", "Modeler", "Maxwell 2D", "Tools", "Window", "Help"];

export default function App() {
    return (
        <div className="relative flex h-screen w-full flex-col overflow-hidden bg-[#efefef] font-['Noto_Sans',sans-serif] text-[15px]">
            <header className="flex h-[29px] shrink-0 items-center overflow-hidden bg-white">
                <h1 className="-ml-px font-['Open_Sans',sans-serif] text-[16px] whitespace-nowrap text-black">
                    axwell - 1 - Maxwell2DDesign1 - 3D Modeler - [1 - Maxwell2DDesign1 - Modeler]
                </h1>
                <button type="button" aria-label="Minimize" className="ml-auto flex w-[46px] shrink-0 justify-center">
                    <span className="h-px w-3 bg-black" />
                </button>
                <button type="button" aria-label="Maximize" className="ml-[29px] h-[10px] w-px shrink-0 bg-black" />
            </header>

            <nav className="flex h-[23px] shrink-0 items-center gap-4 bg-white font-['Open_Sans',sans-serif] text-[16px] text-[#333]">
                <button type="button">it</button>
                {MENUS.map((name) => (
                    <button type="button" key={name} className="whitespace-nowrap">{name}</button>
                ))}
            </nav>

            <div className="shrink-0 overflow-hidden">
                <div className="flex h-[38px] items-center pl-px">
                    <Sep />
                    <Tools names="cut copy paste" />
                    <Sep />
                    <Tool name="print" />
                    <Sep />
                    <Tools names="remove undo redo" />
                    <Grip />
                    <Tool name="local" active />
                    <Tools names="remote cluster" />
                    <Sep />
                    <Combo label="Machine" value="" className="w-[122px]" />
                    <Tool name="clusterEdit" />
                    <Sep />
                    <Tool name="queue" />
                    <Grip />
                    <Tools names="list validate analyze notes" />
                    <Sep />
                    <Tool name="inspect" />
                    <Sep />
                    <Tool name="windows" />
                    <Grip />
                    <Tools names="line spline arc3 arcCenter equation" />
                    <Grip />
                    <Tools names="rect circle hexagon ellipse" />
                    <Grip />
                    <Tool name="box" />
                    <Sep />
                    <Tools names="point plane" />
                    <Sep />
                    <Combo label="Drawing plane" value="In Plane" className="w-[97px]" />
                    <Grip />
                    <Tools names="unite subtract intersect split imprint" />
                    <Grip />
                    <Tools names="move rotate mirror" />
                    <Grip />
                    <Tools names="moveCopy rotateCopy mirrorCopy" />
                </div>
                <div className="-ml-[6px] flex h-[38px] items-center">
                    <Tool name="layers" />
                    <Sep />
                    <Combo label="Material" value="vacuum" className="w-[122px]" />
                    <Sep />
                    <Combo label="Object type" value="Model" className="w-[122px]" />
                    <Grip />
                    <Tools names="section sectionAdd" />
                    <Grip />
                    <Tools names="csRelative csRotate csBoth csFace csObject csObjectRotate csObjectBoth" />
                    <Grip />
                    <Tool name="eye" />
                    <Sep />
                    <Tools names="hideSel hideSelBox" />
                    <Sep />
                    <Tool name="eyeGrey" label="Show in active view" />
                    <Tool name="eyeGreyBox" label="Show only in active view" />
                    <Tool name="eyeGrey" label="Show in all views" />
                    <Tool name="eyeGreyBox" label="Show only in all views" />
                </div>
                <div className="flex h-[38px] items-center pl-px">
                    <Grip />
                    <Tools names="pan rotateModel rotateCurrent rotateScreen zoom" />
                    <Sep />
                    <Tools names="zoomIn zoomOut" />
                    <Sep />
                    <Tool name="fitAll" active />
                    <Tool name="fitSel" />
                    <Sep />
                    <Tools names="undo redo" />
                </div>
            </div>

            <main className="flex min-h-0 flex-1 pb-[7px]">
                <div className="-mb-[7px] flex w-[183px] shrink-0 flex-col">
                    <ProjectManager />
                    <Properties />
                </div>
                <div className="w-[8px] shrink-0" />
                <ModelTree />
                <Viewport />
            </main>

            <BottomDocks />

            <div className="flex h-[26px] shrink-0 items-center overflow-hidden text-[#333]">
                <span className="mt-[4px] -ml-[5px] whitespace-nowrap">o Weilin/Desktop/experiment/1.mxwl</span>
                <span className="mt-[2px] ml-auto h-[20px] w-[35px] border-t border-l border-[#999]" />
            </div>

            <Taskbar />

            {/* screen recorder handle, click highlight and pointer float over the window */}
            <div className="absolute top-[2px] left-[792px] flex h-[10px] w-[71px] items-center rounded-full bg-[#666] pl-[3px] shadow-md">
                <span className="h-[8px] w-[27px] rounded-l-full bg-[repeating-linear-gradient(90deg,#4fd06c_0_2px,#4a6a50_2px_3px)]" />
            </div>
            <div className="pointer-events-none absolute top-[100px] left-[221px] size-[94px] rounded-full bg-[#ffff00]/80" />
            <svg width="14" height="21" viewBox="0 0 14 21" className="pointer-events-none absolute top-[146px] left-[267px]">
                <path d="M1 1v15.500l3.500-3.300 2.600 6 2.600-1.100-2.600-5.900H12z" fill="#fff" stroke="#111" strokeWidth="1.200" />
            </svg>
        </div>
    );
}
